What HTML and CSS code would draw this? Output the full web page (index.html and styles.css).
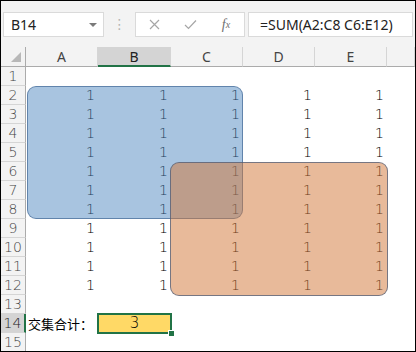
FILE: index.html
```html
<!DOCTYPE html>
<html lang="zh-CN">
<head>
    <meta charset="UTF-8">
    <title>交集合计</title>
    <link rel="stylesheet" href="styles.css">
</head>
<body>
<div class="app">
    <div class="toolbar">
        <div class="name-box">
            <span class="name-text">B14</span>
            <span class="caret"></span>
        </div>
        <div class="grip">⋮</div>
        <div class="fx-buttons">
            <span class="fx-btn">
                <svg width="11" height="11" viewBox="0 0 11 11"><path d="M1 1 L10 10 M10 1 L1 10" stroke="#a6a6a6" stroke-width="1.2" fill="none"/></svg>
            </span>
            <span class="fx-btn">
                <svg width="13" height="11" viewBox="0 0 13 11"><path d="M1 6 L4.5 9.5 L12 1.5" stroke="#a6a6a6" stroke-width="1.2" fill="none"/></svg>
            </span>
            <span class="fx-btn fx-label">f<sub>x</sub></span>
        </div>
        <div class="formula">=SUM(A2:C8 C6:E12)</div>
    </div>

    <div class="sheet" id="sheet">
        <div class="shape shape-blue"></div>
        <div class="shape shape-orange"></div>
    </div>
</div>

<script>
    // 表格：表头 + 15 行
    const sheet = document.getElementById("sheet");
    const cols = ["A", "B", "C", "D", "E", ""];
    const blue = sheet.querySelector(".shape-blue");

    function cell(cls, text) {
        const div = document.createElement("div");
        div.className = cls;
        div.textContent = text || "";
        sheet.insertBefore(div, blue);
        return div;
    }

    cell("hd corner");
    cols.forEach(c => cell("hd col-hd" + (c === "B" ? " sel-col" : ""), c));

    for (let r = 1; r <= 15; r++) {
        cell("hd row-hd" + (r === 14 ? " sel-row" : ""), r);
        cols.forEach((c, i) => {
            if (r >= 2 && r <= 12 && c) {
                cell("cell num", "1");
            } else if (r === 14 && c === "A") {
                cell("cell label", "交集合计：");
            } else if (r === 14 && c === "B") {
                cell("cell active", "3");
            } else {
                cell("cell");
            }
        });
    }
</script>
</body>
</html>
```

FILE: styles.css
```css
body { margin: 0; background: #fff; }
.app { width: 416px; height: 352px; box-sizing: border-box; border: 1px solid #000; overflow: hidden; background: #f3f3f3; font-family: "DejaVu Sans", sans-serif; }

/* 编辑栏 */
.toolbar { height: 46px; display: flex; align-items: flex-start; padding-top: 11px; box-sizing: border-box; }
.name-box { margin-left: 2px; width: 101px; height: 25px; box-sizing: border-box; background: #fff; border: 1px solid #dadada; display: flex; align-items: center; justify-content: space-between; padding: 0 6px 0 7px; }
.name-text { font-family: "Noto Sans", sans-serif; font-size: 14px; color: #222; }
.caret { width: 0; height: 0; border-left: 4px solid transparent; border-right: 4px solid transparent; border-top: 4px solid #7a7a7a; }
.grip { width: 31px; text-align: center; color: #b5b5b5; font-size: 14px; line-height: 25px; }
.fx-buttons { width: 110px; height: 25px; box-sizing: border-box; background: #fff; border: 1px solid #dadada; display: grid; grid-template-columns: repeat(3, 36px); align-items: center; justify-items: center; }
.fx-btn { display: flex; align-items: center; justify-content: center; height: 23px; }
.fx-label { font-family: "Liberation Serif", serif; font-style: italic; font-size: 14px; color: #707070; }
.fx-label sub { font-size: 10px; vertical-align: -1px; }
.formula { margin-left: 3px; width: 165px; height: 25px; box-sizing: border-box; background: #fff; border: 1px solid #dadada; padding-left: 11px; font-family: "Noto Sans", sans-serif; font-size: 14px; line-height: 23px; color: #222; white-space: nowrap; }

/* 工作表 */
.sheet { position: relative; display: grid; grid-template-columns: 25px 72px 73px 72px 72px 72px 1fr; grid-template-rows: 20px; grid-auto-rows: 19px; background: #fff; }
.hd { background: #f3f3f3; box-sizing: border-box; color: #444; font-size: 14px; font-weight: 200; text-align: center; }
.col-hd { border-right: 1px solid #d5d5d5; border-bottom: 1px solid #ababab; line-height: 19px; font-family: "Noto Sans", sans-serif; font-weight: 400; }
.row-hd { border-right: 1px solid #ababab; border-bottom: 1px solid #d5d5d5; line-height: 18px; }
.corner { position: relative; border-right: 1px solid #ababab; border-bottom: 1px solid #ababab; }
.corner::after { content: ""; position: absolute; right: 4px; bottom: 4px; width: 0; height: 0; border-left: 10px solid transparent; border-bottom: 10px solid #b8b8b8; }
.sel-col { background: #d4d4d4; border-bottom: 2px solid #217346; color: #222; }
.sel-row { background: #d4d4d4; border-right: 2px solid #217346; color: #222; }

.cell { font-size: 14px; font-weight: 200; line-height: 19px; color: #000; white-space: nowrap; }
.num { text-align: right; padding-right: 3px; }
.label { padding-left: 2px; font-family: "Noto Sans CJK SC", sans-serif; font-size: 13px; font-weight: 400; }
.active { position: relative; background: #ffd966; text-align: center; outline: 2px solid #217346; outline-offset: -1px; font-size: 15px; }
.active::after { content: ""; position: absolute; right: -4px; bottom: -4px; width: 5px; height: 5px; background: #217346; border: 1px solid #fff; }

/* 半透明形状 */
.shape { position: absolute; box-sizing: border-box; border-radius: 9px; pointer-events: none; }
.shape-blue { left: 26px; top: 39px; width: 216px; height: 133px; background: rgba(70, 130, 190, 0.47); border: 1px solid rgba(40, 80, 130, 0.55); }
.shape-orange { left: 169px; top: 115px; width: 218px; height: 134px; background: rgba(209, 117, 53, 0.5); border: 1px solid rgba(70, 90, 120, 0.7); }
```
